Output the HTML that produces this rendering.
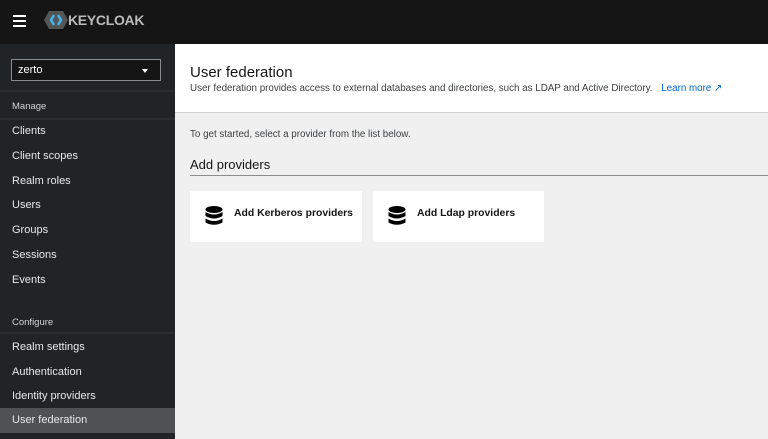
<!DOCTYPE html>
<html><head><meta charset="utf-8"><style>
*{margin:0;padding:0;box-sizing:border-box}
body{width:768px;height:439px;overflow:hidden;font-family:"Liberation Sans",sans-serif;background:#f0f0f0;position:relative}
.top{position:absolute;left:0;top:0;width:768px;height:44px;background:#151515}
.side{position:absolute;left:0;top:44px;width:175px;height:395px;background:#212427;color:#f0f0f0}
.sel{position:absolute;left:11px;top:15px;width:150px;height:22px;border:1px solid #8a8d90;background:#151515;color:#fff;font-size:11px;padding:4px 6px}
.sel:after{content:"";position:absolute;right:12px;top:9px;border:3.5px solid transparent;border-top:4px solid #fff}
.sep{position:absolute;left:0;width:175px;height:2px;background:#2b2e31}
.it{position:absolute;left:12px;font-size:11px;color:#e8e8e8}
.grp{position:absolute;left:12px;font-size:9.5px;color:#d2d2d2}
.act{position:absolute;left:0;top:364px;width:175px;height:25px;background:#4f5255}
.head{position:absolute;left:175px;top:44px;width:593px;height:69px;background:#fff;border-bottom:1px solid #d2d2d2}
.card{position:absolute;top:191px;height:51px;background:#fff;font-size:10.4px;font-weight:bold;color:#151515}
.card span{position:absolute;left:44px;top:17px}
.card svg{position:absolute;left:15px;top:15px}
</style></head><body>
<div class="top">
<div style="position:absolute;left:13px;top:15px;width:13px;height:2px;background:#fff;box-shadow:0 5px 0 #fff,0 10px 0 #fff"></div>
<svg style="position:absolute;left:44px;top:10px" width="24" height="20" viewBox="0 0 24 20"><polygon points="5,1 19,1 24,10 19,19 5,19 0,10" fill="#555"/><path d="M10 5 L7 10 L10 15 M14 5 L17 10 L14 15" stroke="#3db5f0" stroke-width="2.5" fill="none"/></svg>
<div style="position:absolute;left:68px;top:12px;color:#bbb;font-weight:bold;font-size:14px;letter-spacing:-0.3px">KEYCLOAK</div>
</div>
<div class="side">
<div class="sel">zerto</div>
<div class="sep" style="top:46px"></div>
<div class="grp" style="top:57px">Manage</div>
<div class="sep" style="top:74px"></div>
<div class="it" style="top:81px">Clients</div>
<div class="it" style="top:106px">Client scopes</div>
<div class="it" style="top:131px">Realm roles</div>
<div class="it" style="top:155px">Users</div>
<div class="it" style="top:180px">Groups</div>
<div class="it" style="top:205px">Sessions</div>
<div class="it" style="top:230px">Events</div>
<div class="grp" style="top:273px">Configure</div>
<div class="sep" style="top:288px"></div>
<div class="it" style="top:297px">Realm settings</div>
<div class="it" style="top:322px">Authentication</div>
<div class="it" style="top:346px">Identity providers</div>
<div class="act"></div>
<div class="it" style="top:370px">User federation</div>
</div>
<div class="head">
<div style="position:absolute;left:15px;top:20px;font-size:15px;color:#151515">User federation</div>
<div style="position:absolute;left:15px;top:39px;font-size:9.8px;color:#3c3f42;white-space:nowrap">User federation provides access to external databases and directories, such as LDAP and Active Directory. <span style="color:#06c;margin-left:6px">Learn more ↗</span></div>
</div>
<div style="position:absolute;left:190px;top:129px;font-size:9.8px;color:#3c3f42">To get started, select a provider from the list below.</div>
<div style="position:absolute;left:190px;top:157px;font-size:13px;color:#151515">Add providers</div>
<div style="position:absolute;left:190px;top:175px;width:578px;height:1px;background:#8a8d90"></div>
<div class="card" style="left:190px;width:172px"><svg width="18" height="20" viewBox="0 0 18 20"><ellipse cx="9" cy="3.5" rx="8.5" ry="3.5"/><path d="M0.5 6 Q9 11 17.5 6 V10 Q9 15 0.5 10Z M0.5 12.5 Q9 17.5 17.5 12.5 V16.5 Q9 21 0.5 16.5Z"/></svg><span>Add Kerberos providers</span></div>
<div class="card" style="left:373px;width:171px"><svg width="18" height="20" viewBox="0 0 18 20"><ellipse cx="9" cy="3.5" rx="8.5" ry="3.5"/><path d="M0.5 6 Q9 11 17.5 6 V10 Q9 15 0.5 10Z M0.5 12.5 Q9 17.5 17.5 12.5 V16.5 Q9 21 0.5 16.5Z"/></svg><span>Add Ldap providers</span></div>
</body></html>
